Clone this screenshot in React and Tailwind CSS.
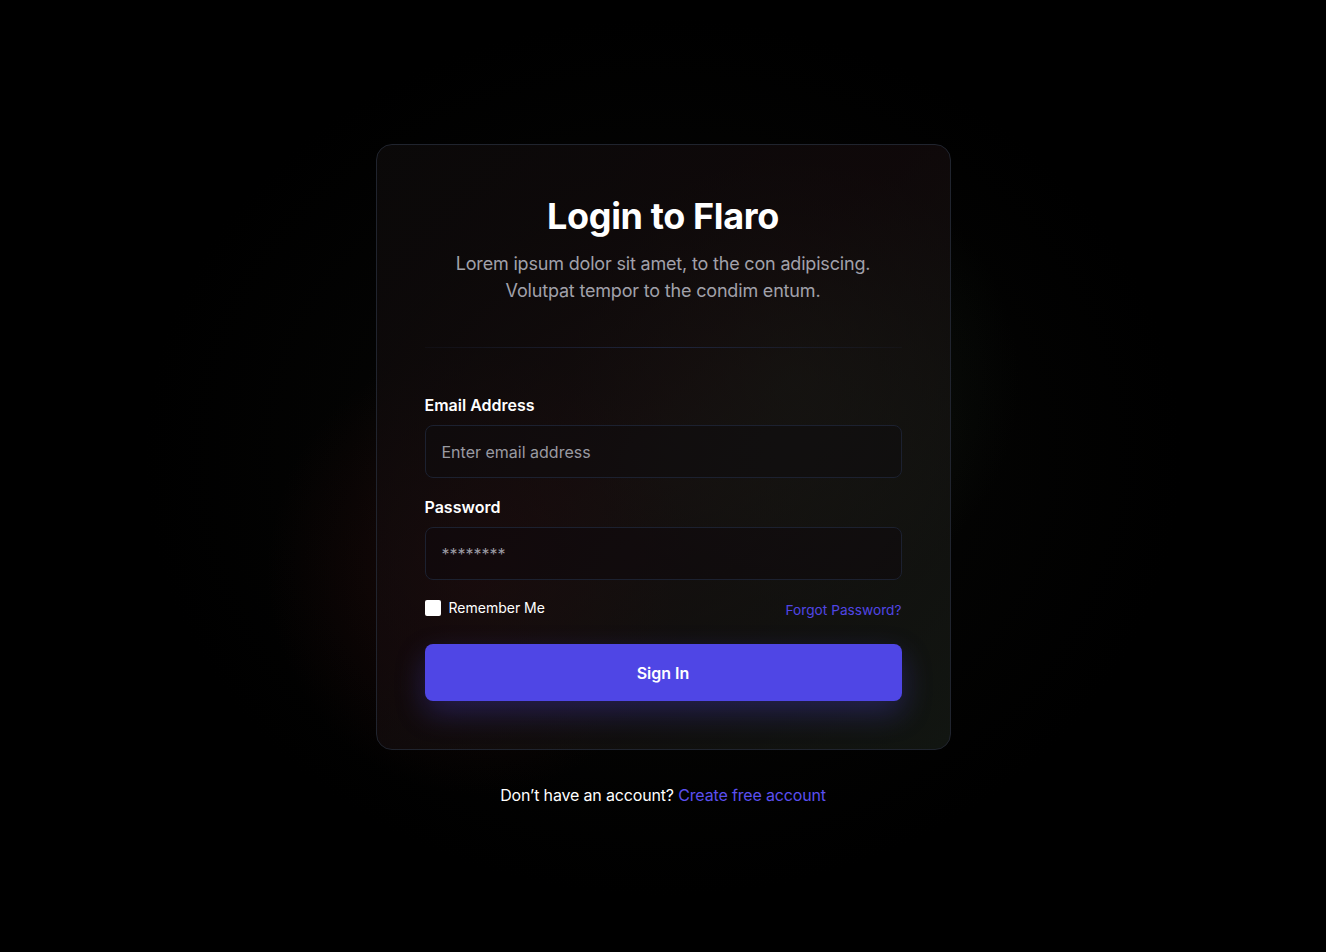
import React, { useState } from 'react';

const App = () => {
  const [remember, setRemember] = useState(false);

  return (
    <div
      className="relative min-h-[952px] w-full bg-black overflow-hidden flex flex-col items-center pt-[144px]"
      style={{ fontFamily: 'Inter, "Noto Sans", sans-serif' }}
    >
      {/* Background glows */}
      <div className="pointer-events-none absolute inset-0 bg-[radial-gradient(ellipse_520px_440px_at_50%_48%,rgba(30,30,24,0.55),rgba(10,10,8,0.3)_60%,transparent_100%)]" />
      <div className="pointer-events-none absolute inset-0 bg-[radial-gradient(ellipse_300px_320px_at_36%_60%,rgba(60,18,18,0.4),transparent_70%)]" />
      <div className="pointer-events-none absolute inset-0 bg-[radial-gradient(ellipse_320px_320px_at_60%_40%,rgba(30,46,30,0.4),transparent_70%)]" />

      {/* Card */}
      <div className="relative w-[575px] rounded-2xl border border-[#20242e] bg-[linear-gradient(135deg,rgba(12,10,10,0.85),rgba(22,12,14,0.65)_45%,rgba(24,30,24,0.7))] px-12 pt-[49px] pb-12">
        <h1 className="text-center text-[36px] leading-[44px] font-bold tracking-[-0.01em] text-white">Login to Flaro</h1>
        <p className="mt-[12px] text-center text-[18px] leading-[27px] tracking-[-0.01em] text-[#a1a1aa]">
          Lorem ipsum dolor sit amet, to the con adipiscing.
          <br />
          Volutpat tempor to the condim entum.
        </p>

        <div className="mt-[43px] h-px bg-[linear-gradient(90deg,rgba(30,36,56,0.2),rgba(32,40,66,0.9)_50%,rgba(30,36,56,0.2))]" />

        <form className="mt-[47px]" onSubmit={(e) => e.preventDefault()}>
          <label className="block text-[16px] leading-[20px] font-semibold text-white">Email Address</label>
          <input
            type="email"
            placeholder="Enter email address"
            className="mt-[10px] h-[53px] w-full rounded-lg border border-[#1c2130] bg-[rgba(14,12,14,0.55)] px-4 text-[16px] text-white placeholder:text-[#9a9aa2] outline-none"
          />

          <label className="mt-[19px] block text-[16px] leading-[20px] font-semibold text-white">Password</label>
          <input
            type="text"
            placeholder="********"
            className="mt-[10px] h-[53px] w-full rounded-lg border border-[#1c2130] bg-[rgba(14,10,12,0.55)] px-4 text-[16px] text-white placeholder:text-[#9a9aa2] outline-none"
          />

          <div className="mt-[15px] flex items-center justify-between">
            <label className="flex items-center gap-2 cursor-pointer">
              <span
                onClick={() => setRemember(!remember)}
                className="h-4 w-4 rounded-[2px] bg-white flex items-center justify-center"
              >
                {remember && (
                  <svg viewBox="0 0 16 16" className="h-3 w-3" fill="none" stroke="#4f46e5" strokeWidth="2.5">
                    <path d="M3 8l3 3 7-7" />
                  </svg>
                )}
              </span>
              <span className="text-[14px] text-white">Remember Me</span>
            </label>
            <a href="#" className="mt-[5px] text-[13.7px] leading-[20px] text-[#5146e5]">Forgot Password?</a>
          </div>

          <button
            type="submit"
            className="mt-[24px] h-[57px] w-full rounded-lg bg-[#4f46e5] text-[16px] font-semibold text-white shadow-[0_12px_30px_rgba(79,70,229,0.3)]"
          >
            Sign In
          </button>
        </form>
      </div>

      <p className="relative mt-[33px] text-[16px] leading-[24px] tracking-[-0.01em] text-white">
        Don’t have an account? <a href="#" className="text-[#5b4ff0]">Create free account</a>
      </p>
    </div>
  );
};

export default App;
